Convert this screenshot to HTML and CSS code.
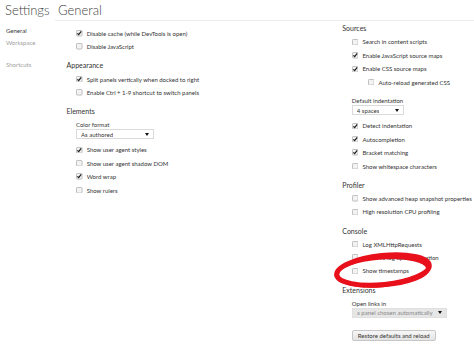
FILE: index.html
```html
<!DOCTYPE html>
<html>
<head>
<meta charset="utf-8">
<title>Settings</title>
<link rel="stylesheet" href="styles.css">
</head>
<body>
<div class="app">
  <aside class="sidebar">
    <h1 class="title">Settings</h1>
    <nav class="nav">
      <div class="nav-item active">General</div>
      <div class="nav-item">Workspace</div>
      <div class="nav-item gap">Shortcuts</div>
    </nav>
  </aside>
  <main class="main">
    <header class="main-header"><h2 class="title">General</h2></header>
    <div class="columns">
      <div class="col col-left">
        <section class="section">
          <div class="row"><svg class="cb" viewBox="0 0 7 7"><rect x=".5" y=".5" width="6" height="6" rx=".8" class="box"/><path d="M1.5 3.6l1.4 1.4 2.7-3.4" class="tick"/></svg>Disable cache (while DevTools is open)</div>
          <div class="row"><svg class="cb" viewBox="0 0 7 7"><rect x=".5" y=".5" width="6" height="6" rx=".8" class="box"/></svg>Disable JavaScript</div>
        </section>
        <section class="section">
          <h3 class="section-title">Appearance</h3>
          <div class="row"><svg class="cb" viewBox="0 0 7 7"><rect x=".5" y=".5" width="6" height="6" rx=".8" class="box"/><path d="M1.5 3.6l1.4 1.4 2.7-3.4" class="tick"/></svg>Split panels vertically when docked to right</div>
          <div class="row"><svg class="cb" viewBox="0 0 7 7"><rect x=".5" y=".5" width="6" height="6" rx=".8" class="box"/></svg>Enable Ctrl + 1-9 shortcut to switch panels</div>
        </section>
        <section class="section">
          <h3 class="section-title">Elements</h3>
          <div class="field">
            <div class="field-label">Color format</div>
            <div class="select w-format"><span class="select-text">As authored</span></div>
          </div>
          <div class="row"><svg class="cb" viewBox="0 0 7 7"><rect x=".5" y=".5" width="6" height="6" rx=".8" class="box"/><path d="M1.5 3.6l1.4 1.4 2.7-3.4" class="tick"/></svg>Show user agent styles</div>
          <div class="row"><svg class="cb" viewBox="0 0 7 7"><rect x=".5" y=".5" width="6" height="6" rx=".8" class="box"/></svg>Show user agent shadow DOM</div>
          <div class="row"><svg class="cb" viewBox="0 0 7 7"><rect x=".5" y=".5" width="6" height="6" rx=".8" class="box"/><path d="M1.5 3.6l1.4 1.4 2.7-3.4" class="tick"/></svg>Word wrap</div>
          <div class="row"><svg class="cb" viewBox="0 0 7 7"><rect x=".5" y=".5" width="6" height="6" rx=".8" class="box"/></svg>Show rulers</div>
        </section>
      </div>
      <div class="col col-right">
        <section class="section">
          <h3 class="section-title">Sources</h3>
          <div class="row"><svg class="cb" viewBox="0 0 7 7"><rect x=".5" y=".5" width="6" height="6" rx=".8" class="box"/></svg>Search in content scripts</div>
          <div class="row"><svg class="cb" viewBox="0 0 7 7"><rect x=".5" y=".5" width="6" height="6" rx=".8" class="box"/><path d="M1.5 3.6l1.4 1.4 2.7-3.4" class="tick"/></svg>Enable JavaScript source maps</div>
          <div class="row"><svg class="cb" viewBox="0 0 7 7"><rect x=".5" y=".5" width="6" height="6" rx=".8" class="box"/><path d="M1.5 3.6l1.4 1.4 2.7-3.4" class="tick"/></svg>Enable CSS source maps</div>
          <div class="row nested"><svg class="cb" viewBox="0 0 7 7"><rect x=".5" y=".5" width="6" height="6" rx=".8" class="box"/></svg>Auto-reload generated CSS</div>
          <div class="field">
            <div class="field-label">Default indentation</div>
            <div class="select w-indent"><span class="select-text">4 spaces</span></div>
          </div>
          <div class="row"><svg class="cb" viewBox="0 0 7 7"><rect x=".5" y=".5" width="6" height="6" rx=".8" class="box"/><path d="M1.5 3.6l1.4 1.4 2.7-3.4" class="tick"/></svg>Detect indentation</div>
          <div class="row"><svg class="cb" viewBox="0 0 7 7"><rect x=".5" y=".5" width="6" height="6" rx=".8" class="box"/><path d="M1.5 3.6l1.4 1.4 2.7-3.4" class="tick"/></svg>Autocompletion</div>
          <div class="row"><svg class="cb" viewBox="0 0 7 7"><rect x=".5" y=".5" width="6" height="6" rx=".8" class="box"/><path d="M1.5 3.6l1.4 1.4 2.7-3.4" class="tick"/></svg>Bracket matching</div>
          <div class="row"><svg class="cb" viewBox="0 0 7 7"><rect x=".5" y=".5" width="6" height="6" rx=".8" class="box"/></svg>Show whitespace characters</div>
        </section>
        <section class="section">
          <h3 class="section-title">Profiler</h3>
          <div class="row"><svg class="cb" viewBox="0 0 7 7"><rect x=".5" y=".5" width="6" height="6" rx=".8" class="box"/></svg>Show advanced heap snapshot properties</div>
          <div class="row"><svg class="cb" viewBox="0 0 7 7"><rect x=".5" y=".5" width="6" height="6" rx=".8" class="box"/></svg>High resolution CPU profiling</div>
        </section>
        <section class="section">
          <h3 class="section-title">Console</h3>
          <div class="row"><svg class="cb" viewBox="0 0 7 7"><rect x=".5" y=".5" width="6" height="6" rx=".8" class="box"/></svg>Log XMLHttpRequests</div>
          <div class="row"><svg class="cb" viewBox="0 0 7 7"><rect x=".5" y=".5" width="6" height="6" rx=".8" class="box"/></svg>Preserve log upon navigation</div>
          <div class="row"><svg class="cb" viewBox="0 0 7 7"><rect x=".5" y=".5" width="6" height="6" rx=".8" class="box"/></svg>Show timestamps</div>
        </section>
        <section class="section">
          <h3 class="section-title">Extensions</h3>
          <div class="field">
            <div class="field-label">Open links in</div>
            <div class="select w-links disabled"><span class="select-text">a panel chosen automatically</span></div>
          </div>
          <button class="btn">Restore defaults and reload</button>
        </section>
      </div>
    </div>
  </main>
</div>
<svg class="annotation" viewBox="0 0 110 46" width="110" height="46">
  <ellipse cx="53" cy="22" rx="46.5" ry="14.5" transform="rotate(-6 53 22)" class="ring"/>
  <ellipse cx="52" cy="23.6" rx="46" ry="14" transform="rotate(-4 52 23.6)" class="ring thin"/>
</svg>
</body>
</html>
```

FILE: styles.css
```css
* { box-sizing: border-box; margin: 0; padding: 0; }

html, body { background: #fff; }

body {
  font-family: "Segoe UI", Lato, "Open Sans", sans-serif;
  font-size: 6px;
  color: #333;
  width: 474px;
  height: 346px;
  overflow: hidden;
  position: relative;
}

.app { display: flex; height: 100%; }

.sidebar { width: 55px; flex: none; padding-left: 5px; }

.title {
  font-weight: 300;
  font-size: 13px;
  line-height: 20px;
  height: 20px;
  color: #444;
}

.nav { padding-left: 1px; padding-top: 5px; }
.nav-item { height: 11.5px; line-height: 11.5px; color: #a0a0a0; }
.nav-item.active { color: #333; }
.nav-item.gap { margin-top: 11px; }

.main { flex: 1; display: flex; flex-direction: column; }
.main-header {
  height: 21px;
  border-bottom: 1px solid #ebebeb;
  padding-left: 3px;
}

.columns { display: flex; }
.col-left { width: 275px; flex: none; padding-left: 11.5px; padding-top: 5.6px; }
.col-right { flex: 1; padding-left: 12.3px; padding-top: 0.3px; }

.section + .section { margin-top: 5px; }

.section-title {
  font-size: 7px;
  font-weight: normal;
  height: 14px;
  line-height: 14px;
  color: #333;
}

.row {
  display: flex;
  align-items: center;
  height: 13.4px;
  margin-left: 9.5px;
  white-space: nowrap;
}
.row.nested { margin-left: 25.5px; }

.cb { width: 6.5px; height: 6.5px; flex: none; margin-right: 4.2px; }
.cb .box { fill: #f3f3f3; stroke: #b9b9b9; stroke-width: 1; }
.cb .tick { fill: none; stroke: #1e1e1e; stroke-width: 1.3; }

.field { margin-left: 9.5px; margin-top: 2px; }
.row + .field { margin-top: 7.3px; }
.field + .row { margin-top: 4px; }
.field-label { height: 9px; line-height: 9px; }

.select {
  height: 10px;
  border: 1px solid #dadada;
  background: #fff;
  display: flex;
  align-items: center;
  justify-content: space-between;
  padding: 0 4px 0 4px;
  white-space: nowrap;
}
.select-text { overflow: hidden; min-width: 0; }
.select::after {
  content: "";
  flex: none;
  margin-left: 3px;
  border-left: 2px solid transparent;
  border-right: 2px solid transparent;
  border-top: 3px solid #111;
}
.w-format { width: 77.5px; }
.w-indent { width: 52px; }
.w-links { width: 95px; }
.select.disabled { background: #e6e6e6; border-color: #e0e0e0; color: #8a8a8a; }

.btn {
  display: block;
  margin-top: 12px;
  margin-left: 9.5px;
  height: 11px;
  padding: 0 5px;
  border: 1px solid #c6c6c6;
  border-radius: 2px;
  background: linear-gradient(#f7f7f7, #e4e4e4);
  font: inherit;
  color: #333;
}

.annotation {
  position: absolute;
  left: 330px;
  top: 248px;
}
.ring { fill: none; stroke: #e8101a; stroke-width: 5; }
.ring.thin { stroke-width: 3.5; }
```
